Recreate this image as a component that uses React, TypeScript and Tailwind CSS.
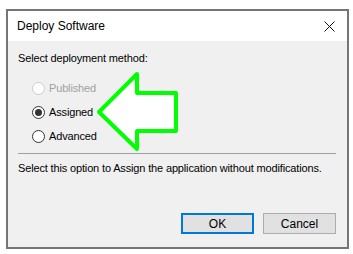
import React from 'react';

const font = { fontFamily: '"Liberation Sans", Arial, sans-serif' };

const Radio = ({ label, checked, disabled }: { label: string; checked?: boolean; disabled?: boolean }) => (
  <label className="flex items-center h-[24px] gap-[4px]">
    <span
      className={`w-[13px] h-[13px] rounded-full border flex items-center justify-center bg-white ${
        disabled ? 'border-[#cccccc]' : 'border-[#333333]'
      }`}
    >
      {checked && <span className="w-[7px] h-[7px] rounded-full bg-[#333333]" />}
    </span>
    <span className={disabled ? 'text-[#a0a0a0]' : 'text-black'}>{label}</span>
  </label>
);

export default function App() {
  return (
    <div className="w-[353px] h-[254px] bg-white pt-[9px] pl-[6px] text-[11px] tracking-[-0.15px] leading-none" style={font}>
      <div className="relative w-[343px] h-[240px] border-2 border-[#767676] bg-[#f0f0f0] flex flex-col">
        <div className="h-[30px] bg-white flex items-center justify-between pl-[9px] pr-[12px] text-[12px] tracking-normal text-black">
          <span>Deploy Software</span>
          <svg width="11" height="11" viewBox="0 0 11 11">
            <path d="M0.5 0.5 L10.5 10.5 M10.5 0.5 L0.5 10.5" stroke="#111" strokeWidth="1" />
          </svg>
        </div>
        <div className="flex-1 flex flex-col px-[10px]">
          <div className="pt-[12px] text-black">Select deployment method:</div>
          <div className="flex flex-col pl-[14px] pt-[12px]">
            <Radio label="Published" disabled />
            <Radio label="Assigned" checked />
            <Radio label="Advanced" />
          </div>
          <div className="mt-[5px] h-px bg-[#a0a0a0] mr-[1px]" />
          <div className="pt-[9px] text-black">Select this option to Assign the application without modifications.</div>
          <div className="mt-auto mb-[13px] flex justify-end gap-[9px] pr-[1px]">
            <button className="w-[73px] h-[21px] border-2 border-[#0078d7] bg-[#e1e1e1] text-black text-[12px] tracking-normal">OK</button>
            <button className="w-[73px] h-[21px] border border-[#adadad] bg-[#e1e1e1] text-black text-[12px] tracking-normal">Cancel</button>
          </div>
        </div>
        <svg className="absolute left-0 top-0" width="343" height="240" viewBox="0 0 343 240" style={{ pointerEvents: 'none' }}>
          <polygon
            points="91,101 129,63 129,82 168,82 168,120 129,120 129,138"
            fill="white"
            stroke="#00ff00"
            strokeWidth="4"
            strokeLinejoin="round"
          />
        </svg>
      </div>
    </div>
  );
}
